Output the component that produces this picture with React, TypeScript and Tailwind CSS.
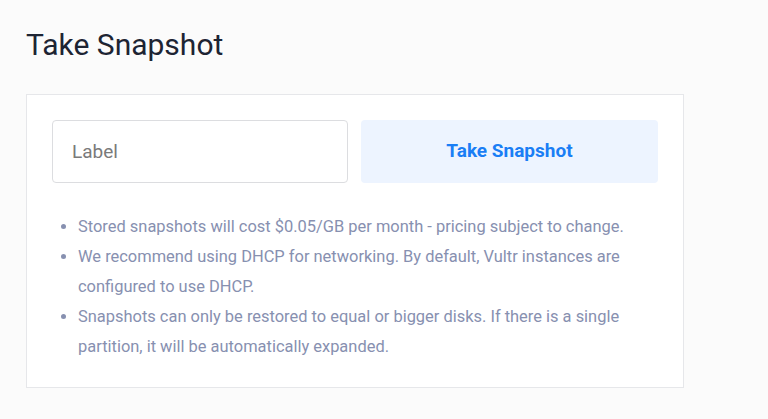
import React from "react";

const notes = [
  "Stored snapshots will cost $0.05/GB per month - pricing subject to change.",
  "We recommend using DHCP for networking. By default, Vultr instances are configured to use DHCP.",
  "Snapshots can only be restored to equal or bigger disks. If there is a single partition, it will be automatically expanded.",
];

export default function App() {
  return (
    <div
      className="min-h-screen w-full bg-[#fbfbfb] px-[26px] pt-[27px]"
      style={{ fontFamily: "Roboto, 'Liberation Sans', sans-serif" }}
    >
      <h1 className="text-[30px] leading-[36px] font-normal text-[#1d2433]">Take Snapshot</h1>

      {/* Card */}
      <div className="mt-[31px] w-[658px] bg-white border border-[#e6e7ea] px-[25px] pt-[25px] pb-[25px]">
        <div className="flex gap-[13px]">
          <input
            type="text"
            placeholder="Label"
            className="w-[296px] h-[63px] rounded-[4px] border border-[#dcdde0] bg-white px-[19px] text-[19px] text-[#333] placeholder:text-[#7a7a7a] outline-none"
          />
          <button className="w-[297px] h-[63px] rounded-[4px] bg-[#edf4ff] text-[19px] font-bold text-[#1a7ef5]">
            Take Snapshot
          </button>
        </div>

        <ul className="mt-[29px] pl-[26px] pr-[10px] list-disc text-[16.45px] leading-[30px] text-[#8790b0] marker:text-[#8790b0]">
          {notes.map((n) => (
            <li key={n}>{n}</li>
          ))}
        </ul>
      </div>
    </div>
  );
}
